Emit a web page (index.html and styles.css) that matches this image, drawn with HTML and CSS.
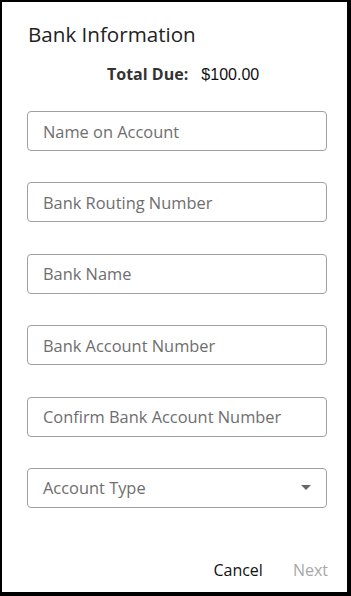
FILE: index.html
```html
<!DOCTYPE html>
<html lang="en">
  <head>
    <meta charset="UTF-8" />
    <meta name="viewport" content="width=device-width, initial-scale=1.0" />
    <title>Bank Information</title>
    <link rel="stylesheet" href="styles.css">
  </head>
  <body>
    <div class="dialog">
      <h2 class="title">Bank Information</h2>

      <div class="total">
        <span class="total-label">Total Due:</span>
        <span class="total-value">$100.00</span>
      </div>

      <form class="fields">
        <input type="text" class="field" placeholder="Name on Account" />
        <input type="text" class="field" placeholder="Bank Routing Number" />
        <input type="text" class="field" placeholder="Bank Name" />
        <input type="text" class="field" placeholder="Bank Account Number" />
        <input type="text" class="field" placeholder="Confirm Bank Account Number" />
        <div class="field select">
          <span>Account Type</span>
          <span class="arrow"></span>
        </div>
      </form>

      <div class="actions">
        <button type="button" class="btn">Cancel</button>
        <button type="button" class="btn disabled">Next</button>
      </div>
    </div>
  </body>
</html>
```

FILE: styles.css
```css
html,
body {
  margin: 0;
  padding: 0;
  background: #fff;
}

.dialog {
  box-sizing: border-box;
  width: 351px;
  height: 596px;
  border-style: solid;
  border-color: #000;
  border-width: 2px 4px 4px 2px;
  padding: 19px 19px 0 25px;
  font-family: "Open Sans", sans-serif;
  display: flex;
  flex-direction: column;
}

.title {
  margin: 0;
  font-size: 20.6px;
  font-weight: 400;
  line-height: 27px;
  color: #222;
  padding-left: 1px;
}

.total {
  margin-top: 15px;
  padding-left: 80px;
  font-size: 16px;
  line-height: 22px;
  color: #222;
}

.total-label {
  font-weight: 700;
  color: #333;
  margin-right: 9px;
}

.total-value {
  font-family: "Liberation Sans", Arial, sans-serif;
  color: #111;
}

.fields {
  margin-top: 25px;
  display: flex;
  flex-direction: column;
  gap: 31.4px;
}

.field {
  box-sizing: border-box;
  width: 300px;
  height: 40px;
  border: 1px solid #a0a0a0;
  border-radius: 4px;
  padding: 0 15px;
  font-family: "Open Sans", sans-serif;
  font-size: 16.4px;
  color: #333;
  background: #fff;
  outline: none;
}

.field::placeholder {
  color: #6e6e6e;
}

.select {
  display: flex;
  align-items: center;
  justify-content: space-between;
  color: #6e6e6e;
}

.arrow {
  width: 0;
  height: 0;
  border-left: 5px solid transparent;
  border-right: 5px solid transparent;
  border-top: 5px solid #666;
}

.actions {
  margin-top: auto;
  display: flex;
  justify-content: flex-end;
  padding-bottom: 7px;
}

.btn {
  background: none;
  border: none;
  padding: 4px 0;
  font-family: "Open Sans", sans-serif;
  font-size: 16px;
  color: #111;
  cursor: pointer;
}

.btn + .btn {
  margin-left: 30px;
}

.disabled {
  color: #a8a8a8;
  cursor: default;
}
```
